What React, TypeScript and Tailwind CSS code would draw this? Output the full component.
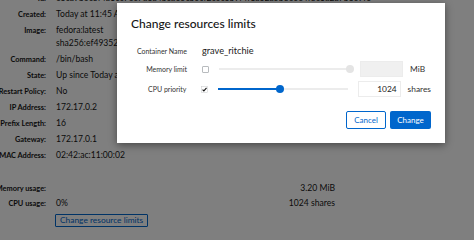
import React from 'react'

const font = { fontFamily: 'Lato, "Open Sans", "Liberation Sans", sans-serif' }

function Row({ label, children }: { label: string; children: React.ReactNode }) {
  return (
    <div className="flex gap-[10px] leading-[13px]">
      <div className="w-[46px] shrink-0 flex justify-end whitespace-nowrap font-bold text-[7.4px]">{label}</div>
      <div className="whitespace-nowrap">{children}</div>
    </div>
  )
}

export default function App() {
  return (
    <div className="relative w-[474px] h-[240px] overflow-hidden bg-white text-[#151515] text-[8.6px]" style={font}>
      {/* page behind the dialog */}
      <div className="flex flex-col gap-[3px] -mt-[8px]">
        <Row label="Id:">e3ca9b6c8f4a1ec7ee7d3a4bcd05cb0cf2c6c3b9f4f1a32a5b8e0e4f8c1d2a7b3e9f0</Row>
        <Row label="Created:">Today at 11:45 AM</Row>
        <Row label="Image:">
          <div>fedora:latest</div>
          <div>sha256:ef49352c9c21</div>
        </Row>
        <Row label="Command:">/bin/bash</Row>
        <Row label="State:">Up since Today at 11:45 AM</Row>
        <Row label="Restart Policy:">No</Row>
        <Row label="IP Address:">172.17.0.2</Row>
        <Row label="IP Prefix Length:">16</Row>
        <Row label="Gateway:">172.17.0.1</Row>
        <Row label="MAC Address:">02:42:ac:11:00:02</Row>
        <div className="h-[14px]" />
        <div className="flex gap-[10px] leading-[13px]">
          <div className="w-[46px] shrink-0 flex justify-end whitespace-nowrap font-bold text-[7.4px]">Memory usage:</div>
          <div className="w-[269px]" />
          <div className="w-0 flex justify-end whitespace-nowrap">3.20 MiB</div>
        </div>
        <div className="flex gap-[10px] leading-[13px] -mt-[1px]">
          <div className="w-[46px] shrink-0 flex justify-end whitespace-nowrap font-bold text-[7.4px]">CPU usage:</div>
          <div className="w-[269px]">0%</div>
          <div className="w-0 flex justify-end whitespace-nowrap">1024 shares</div>
        </div>
        <div className="flex gap-[9px] mt-[1px]">
          <div className="w-[46px] shrink-0" />
          <button className="h-[13px] px-[4px] border border-[#0066cc] text-[#0066cc] text-[8.4px] leading-[11px] rounded-[1px] whitespace-nowrap">
            Change resource limits
          </button>
        </div>
      </div>

      {/* backdrop */}
      <div className="absolute inset-0 bg-black/50" />

      {/* dialog */}
      <div className="absolute left-[117px] top-[3px] w-[328px] h-[140px] bg-white shadow-[0_2px_8px_rgba(0,0,0,0.45)] px-[14px] pt-[12px]">
        <h1 className="text-[12px] leading-[18px] text-[#151515] font-medium">Change resources limits</h1>
        <div className="mt-[10px] flex flex-col text-[7px] text-[#333]">
          <div className="flex items-center h-[16px]">
            <div className="w-[56px] text-right whitespace-nowrap">Container Name</div>
            <div className="ml-[15px] text-[9.2px] text-[#222]">grave_ritchie</div>
          </div>
          <div className="flex items-center h-[20px]">
            <div className="w-[56px] text-right whitespace-nowrap">Memory limit</div>
            <div className="ml-[15px] w-[7px] h-[7px] border border-[#b8bbbe] rounded-[1px] bg-white" />
            <div className="ml-[10px] w-[131px] h-[5px] flex items-center">
              <div className="relative w-full h-[2px] bg-[#ececec]">
                <div className="absolute right-[-4px] top-[-3px] w-[8px] h-[8px] rounded-full bg-[#e4e4e4]" />
              </div>
            </div>
            <div className="ml-[10px] w-[43px] h-[16px] bg-[#f0f0f0] border border-[#ececec]" />
            <div className="ml-[7px] text-[8.4px]">MiB</div>
          </div>
          <div className="flex items-center h-[20px]">
            <div className="w-[56px] text-right whitespace-nowrap">CPU priority</div>
            <div className="ml-[15px] w-[7px] h-[7px] flex items-center justify-center">
              <svg viewBox="0 0 8 8" className="w-[7px] h-[7px]">
                <rect x="0.5" y="0.5" width="7" height="7" fill="#fff" stroke="#c9cbcc" strokeWidth="0.6" />
                <path d="M1.8 4.1 L3.3 5.6 L6.3 2.2" fill="none" stroke="#151515" strokeWidth="1.3" />
              </svg>
            </div>
            <div className="ml-[10px] w-[131px] h-[5px] flex items-center">
              <div className="relative w-full h-[2px] bg-[#ececec]">
                <div className="absolute left-0 top-0 h-[2px] w-[62px] bg-[#0066cc]" />
                <div className="absolute left-[58px] top-[-3px] w-[8px] h-[8px] rounded-full bg-[#0066cc]" />
              </div>
            </div>
            <div className="ml-[10px] w-[43px] h-[16px] bg-white border border-[#ececec] flex items-center justify-end pr-[3px] text-[8.4px] text-[#222]">1024</div>
            <div className="ml-[7px] text-[8.4px]">shares</div>
          </div>
          <div className="flex justify-end gap-[4px] mt-[12px]">
            <button className="h-[18px] w-[40px] border border-[#0066cc] text-[#0066cc] rounded-[2px] text-[8px] leading-[16px]">Cancel</button>
            <button className="h-[18px] w-[41px] bg-[#0066cc] text-white rounded-[2px] text-[8px] leading-[18px]">Change</button>
          </div>
        </div>
      </div>
    </div>
  )
}
